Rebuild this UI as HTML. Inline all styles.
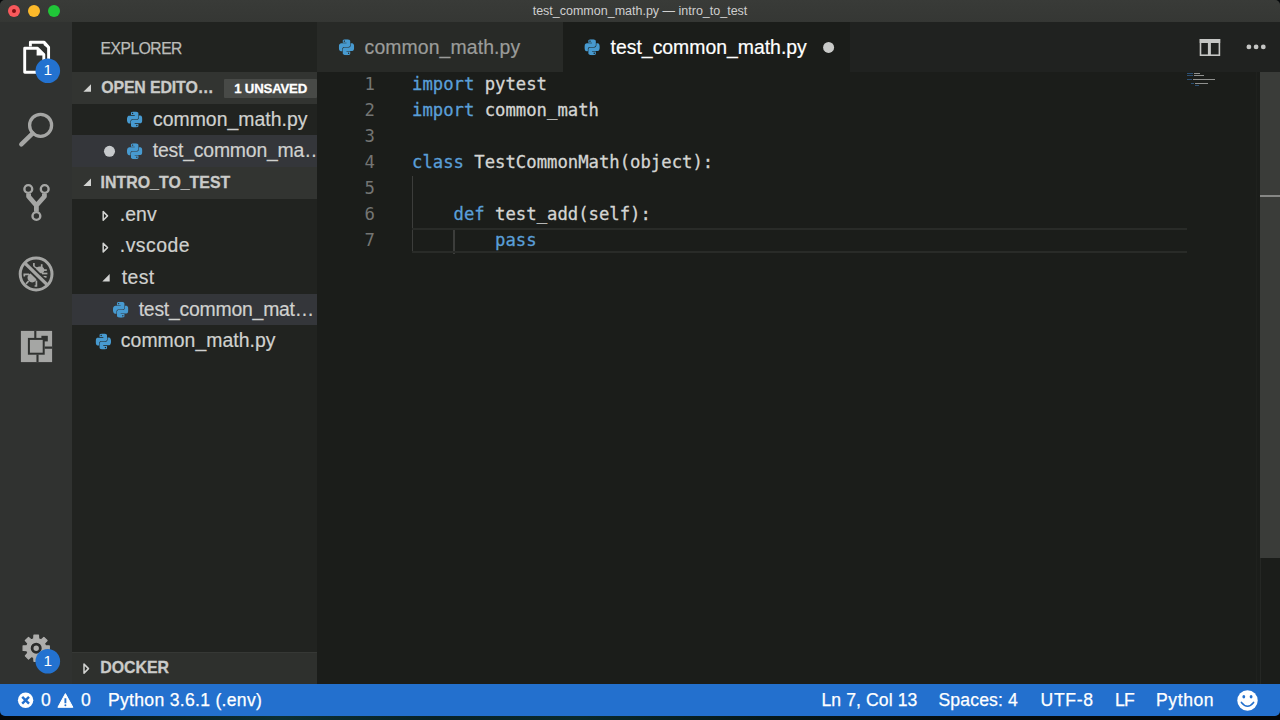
<!DOCTYPE html>
<html><head><meta charset="utf-8"><title>test_common_math.py — intro_to_test</title>
<style>
*{margin:0;padding:0;box-sizing:border-box}
html,body{width:1280px;height:720px;overflow:hidden;background:#06090b;font-family:"Liberation Sans",sans-serif;}
.abs{position:absolute}
#desk{position:absolute;left:0;top:708px;width:1280px;height:12px;background:linear-gradient(90deg,#05080a 0%,#0a2024 12%,#0c3034 22%,#082226 34%,#0a2a2c 45%,#06181a 60%,#050d10 75%,#05080a 100%)}
#win{position:absolute;left:0;top:0;width:1280px;height:715.7px;background:#1b1d1a;overflow:hidden;border-radius:5px}
#title{position:absolute;left:0;top:0;width:1280px;height:22px;background:linear-gradient(#393b38,#353734);color:#cfcfcf;font-size:12.5px;text-align:center;line-height:23px;white-space:nowrap}
.tl{position:absolute;top:4.5px;width:12.6px;height:12.6px;border-radius:50%}
#act{position:absolute;left:0;top:22px;width:72px;height:662px;background:#303230}
#side{position:absolute;left:72px;top:22px;width:245px;height:662px;background:#212320;color:#cccccc;overflow:hidden}
#side .ttl{-webkit-text-stroke:0.25px;position:absolute;left:29.5px;top:0;height:50px;line-height:54.4px;font-size:15.6px;color:#bbbcba;white-space:nowrap}
.hdr{-webkit-text-stroke:0.3px;position:absolute;left:0;width:245px;height:31.7px;background:#323431;font-weight:bold;font-size:15.9px;color:#cacbc9;line-height:32px;white-space:nowrap}
.row{-webkit-text-stroke:0.2px;position:absolute;left:0;width:245px;height:31.7px;font-size:19.4px;line-height:30.4px;color:#d0d1cf;white-space:nowrap;overflow:hidden}
.row.sel{background:#34363a}
.badge{position:absolute;left:152.3px;top:6.6px;width:92.7px;height:18.8px;background:#484a47;color:#ffffff;font-size:13.2px;line-height:19.5px;font-weight:bold;text-align:center;border-radius:1px}
#tabs{position:absolute;left:317px;top:22px;width:963px;height:50px;background:#202220}
.tab{-webkit-text-stroke:0.2px;position:absolute;top:0;height:50px;font-size:19.4px;line-height:51px;white-space:nowrap}
#ed{position:absolute;left:317px;top:72px;width:963px;height:612px;background:#1b1d1a;font-family:"DejaVu Sans Mono","Liberation Mono",monospace;font-size:17.25px}
.ln{position:absolute;left:0;width:58px;text-align:right;color:#747573;height:26px;line-height:26px}
.cl{position:absolute;left:95px;height:26px;line-height:26px;color:#d4d5d3;white-space:pre;-webkit-text-stroke:0.3px}
.k{color:#5a9fd8}
.g{position:absolute;background:#3c3d3b;width:1.4px}
.cur{position:absolute;left:95px;width:775px;height:2.9px;background:#292b28}
#status{-webkit-text-stroke:0.25px;position:absolute;left:0;top:684px;width:1280px;height:32px;background:#2370ce;color:#fff;font-size:17.6px;line-height:32px;white-space:nowrap}
#status span{position:absolute;top:0}
.b1{position:absolute;color:#fff;font-size:15.4px;line-height:16px;width:20px;text-align:center}
#t_expl{letter-spacing:-0.437px;margin-left:-1.00px}
#t_oe{letter-spacing:-0.126px;margin-left:0.00px}
#t_uns{letter-spacing:-0.180px;margin-left:0.00px}
#t_r1{letter-spacing:0.042px;margin-left:0.60px}
#t_itt{letter-spacing:0.015px;margin-left:-0.60px}
#t_env{letter-spacing:0.060px;margin-left:-1.20px}
#t_vsc{letter-spacing:0.480px;margin-left:-1.20px}
#t_test{letter-spacing:0.360px;margin-left:0.80px}
#t_r3{letter-spacing:-0.228px;margin-left:0.40px}
#t_r4{letter-spacing:0.042px;margin-left:-0.20px}
#t_dock{letter-spacing:0.000px;margin-left:-1.00px}
#t_tab1{letter-spacing:0.111px;margin-left:0.40px}
#t_tab2{letter-spacing:0.000px;margin-left:1.00px}
#t_s0{letter-spacing:0.000px;margin-left:0.80px}
#t_s1{letter-spacing:0.000px;margin-left:0.80px}
#t_spy{letter-spacing:0.290px;margin-left:0.00px}
#t_ln{letter-spacing:0.082px;margin-left:0.00px}
#t_sp{letter-spacing:0.135px;margin-left:0.00px}
#t_utf{letter-spacing:0.630px;margin-left:-0.40px}
#t_lf{letter-spacing:-0.700px;margin-left:-0.50px}
#t_lang{letter-spacing:0.576px;margin-left:0.00px}

</style></head><body>
<div id="desk"></div>
<div id="win">
 <div id="title"><span id="t_title">test_common_math.py — intro_to_test</span>
  <div class="tl" style="left:7.6px;background:#f9595c"></div>
  <div class="tl" style="left:27.7px;background:#fcb92a"></div>
  <div class="tl" style="left:47.7px;background:#20c638"></div>
  <div class="abs" style="left:11.8px;top:8.7px;width:4.2px;height:4.2px;border-radius:50%;background:#7d1012"></div>
 </div>
 <div id="act"></div>
 <div id="side">
  <div class="ttl"><span id="t_expl">EXPLORER</span></div>
  <div class="hdr" style="top:50.3px"><span class="abs" id="t_oe" style="left:29.2px">OPEN EDITO…</span><div class="badge"><span id="t_uns">1 UNSAVED</span></div></div>
  <div class="row" style="top:81.7px"><span class="abs" id="t_r1" style="left:80.3px">common_math.py</span></div>
  <div class="row sel" style="top:113.4px"><span class="abs" id="t_r2" style="left:80.7px;letter-spacing:-0.19px">test_common_ma…</span></div>
  <div class="hdr" style="top:145.1px"><span class="abs" id="t_itt" style="left:29.2px">INTRO_TO_TEST</span></div>
  <div class="row" style="top:176.7px"><span class="abs" id="t_env" style="left:49px">.env</span></div>
  <div class="row" style="top:208.4px"><span class="abs" id="t_vsc" style="left:49px">.vscode</span></div>
  <div class="row" style="top:240.1px"><span class="abs" id="t_test" style="left:49px">test</span></div>
  <div class="row sel" style="top:271.8px"><span class="abs" id="t_r3" style="left:66.3px">test_common_mat…</span></div>
  <div class="row" style="top:303.4px"><span class="abs" id="t_r4" style="left:49px">common_math.py</span></div>
  <div class="hdr" style="top:629.6px;height:33px;background:#2e302d;border-top:1.4px solid #363835;line-height:30.6px"><span class="abs" id="t_dock" style="left:29.2px">DOCKER</span></div>
 </div>
 <div id="tabs">
  <div class="tab" style="left:0;width:246px;background:#282a27;color:#9b9c9a"><span class="abs" id="t_tab1" style="left:47.2px">common_math.py</span></div>
  <div class="tab" style="left:246px;width:287px;background:#1b1d1a;color:#ffffff"><span class="abs" id="t_tab2" style="left:46.6px">test_common_math.py</span></div>
 </div>
 <div id="ed">
  <div class="g" style="left:94.8px;top:103.7px;height:77.8px"></div>
  <div class="g" style="left:136.3px;top:155.5px;height:26px"></div>
  <div class="cur" style="top:155.5px"></div><div class="cur" style="top:178.5px"></div>
  <div class="ln" style="top:-1.00px">1</div><div class="cl" style="top:-1.00px"><span class="k">import</span> pytest</div>
  <div class="ln" style="top:24.92px">2</div><div class="cl" style="top:24.92px"><span class="k">import</span> common_math</div>
  <div class="ln" style="top:50.84px">3</div>
  <div class="ln" style="top:76.76px">4</div><div class="cl" style="top:76.76px"><span class="k">class</span> TestCommonMath(object):</div>
  <div class="ln" style="top:102.68px">5</div>
  <div class="ln" style="top:128.60px">6</div><div class="cl" style="top:128.60px">    <span class="k">def</span> test_add(self):</div>
  <div class="ln" style="top:154.52px">7</div><div class="cl" style="top:154.52px">        <span class="k">pass</span></div>
  <!-- minimap -->
  <div class="abs" style="left:870.20px;top:0.55px;width:12.35px;height:1.5px;background:linear-gradient(90deg,#2d5073 0 46.2%,transparent 46.2% 53.8%,#8f908e 53.8%)"></div>
  <div class="abs" style="left:870.20px;top:2.55px;width:17.10px;height:1.5px;background:linear-gradient(90deg,#2d5073 0 33.3%,transparent 33.3% 38.9%,#8f908e 38.9%)"></div>
  <div class="abs" style="left:870.20px;top:6.55px;width:27.55px;height:1.5px;background:linear-gradient(90deg,#2d5073 0 17.2%,transparent 17.2% 20.7%,#8f908e 20.7%)"></div>
  <div class="abs" style="left:874.00px;top:10.55px;width:17.10px;height:1.5px;background:linear-gradient(90deg,#2d5073 0 16.7%,transparent 16.7% 22.2%,#8f908e 22.2%)"></div>
  <div class="abs" style="left:877.80px;top:12.55px;width:3.80px;height:1.5px;background:#2d5073"></div>
  <!-- scrollbar -->
  <div class="abs" style="left:939.4px;top:0;width:1px;height:612px;background:#1f211e"></div><div class="abs" style="left:943.2px;top:0;width:1.3px;height:612px;background:#252724"></div>
  <div class="abs" style="left:943px;top:0;width:20px;height:486px;background:#3a3c39"></div>
  <div class="abs" style="left:943px;top:122.6px;width:20px;height:2.8px;background:#868785"></div>
 </div>
 <div id="status">
  <span id="t_s0" style="left:40.3px">0</span><span id="t_s1" style="left:80.3px">0</span><span id="t_spy" style="left:108px">Python 3.6.1 (.env)</span>
  <span id="t_ln" style="left:821.5px">Ln 7, Col 13</span><span id="t_sp" style="left:938.5px">Spaces: 4</span><span id="t_utf" style="left:1041px">UTF-8</span><span id="t_lf" style="left:1115.5px">LF</span><span id="t_lang" style="left:1156px">Python</span>
 </div>
 
<svg class="abs" style="left:0;top:0" width="1280" height="720" viewBox="0 0 1280 720">
<defs><symbol id="py" viewBox="0 0 24 24" preserveAspectRatio="none"><path fill="#479ad0" d="M14.25.18l.9.2.73.26.59.3.45.32.34.34.25.34.16.33.1.3.04.26.02.2-.01.13V8.5l-.05.63-.13.55-.21.46-.26.38-.3.31-.33.25-.35.19-.35.14-.33.1-.3.07-.26.04-.21.02H8.77l-.69.05-.59.14-.5.22-.41.27-.33.32-.27.35-.2.36-.15.37-.1.35-.07.32-.04.27-.02.21v3.06H3.17l-.21-.03-.28-.07-.32-.12-.35-.18-.36-.26-.36-.36-.35-.46-.32-.59-.28-.73-.21-.88-.14-1.05-.05-1.23.06-1.22.16-1.04.24-.87.32-.71.36-.57.4-.44.42-.33.42-.24.4-.16.36-.1.32-.05.24-.01h.16l.06.01h8.16v-.83H6.18l-.01-2.75-.02-.37.05-.34.11-.31.17-.28.25-.26.31-.23.38-.2.44-.18.51-.15.58-.12.64-.1.71-.06.77-.04.84-.02 1.27.05zm-6.3 1.98l-.23.33-.08.41.08.41.23.34.33.22.41.09.41-.09.33-.22.23-.34.08-.41-.08-.41-.23-.33-.33-.22-.41-.09-.41.09zm13.09 3.95l.28.06.32.12.35.18.36.27.36.35.35.47.32.59.28.73.21.88.14 1.04.05 1.23-.06 1.23-.16 1.04-.24.86-.32.71-.36.57-.4.45-.42.33-.42.24-.4.16-.36.09-.32.05-.24.02-.16-.01h-8.22v.82h5.84l.01 2.76.02.36-.05.34-.11.31-.17.29-.25.25-.31.24-.38.2-.44.17-.51.15-.58.13-.64.09-.71.07-.77.04-.84.01-1.27-.04-1.07-.14-.9-.2-.73-.25-.59-.3-.45-.33-.34-.34-.25-.34-.16-.33-.1-.3-.04-.25-.02-.2.01-.13v-5.34l.05-.64.13-.54.21-.46.26-.38.3-.32.33-.24.35-.2.35-.14.33-.1.3-.06.26-.04.21-.02.13-.01h5.84l.69-.05.59-.14.5-.21.41-.28.33-.32.27-.35.2-.36.15-.36.1-.35.07-.32.04-.28.02-.21V6.07h2.09l.14.01zm-6.47 14.25l-.23.33-.08.41.08.41.23.33.33.23.41.08.41-.08.33-.23.23-.33.08-.41-.08-.41-.23-.33-.33-.23-.41-.08-.41.08z"/></symbol></defs>
<!-- files icon -->
<g fill="none" stroke="#ffffff" stroke-width="2.9" stroke-linejoin="round">
 <path d="M30.4 46.5V42.3H44.2L48.6 47.2V66.5H45.5"/>
 <path d="M24.7 48.2H37.5L43.8 54.6V72.3H24.7Z"/>
</g>
<path d="M36.6 47.4V55.6H44.6L44.6 54Z" fill="#ffffff"/>
<path d="M43.6 42L49.4 47.6L49.4 49.5L43.6 45Z" fill="#ffffff"/>
<circle cx="47.8" cy="70.8" r="12.3" fill="#2372d0"/>
<!-- search -->
<circle cx="40.6" cy="125.3" r="11" fill="none" stroke="#a5a6a4" stroke-width="3.3"/>
<path d="M32.6 133.4L21.3 144.4" stroke="#a5a6a4" stroke-width="4.4" stroke-linecap="round"/>
<!-- git -->
<g fill="none" stroke="#a5a6a4">
 <path d="M28.6 193.5V196.5L36.4 205.5L44.4 196.5V193.5M36.4 204V211.5" stroke-width="4.8" stroke-linejoin="round"/>
 <circle cx="28.3" cy="189" r="3.9" stroke-width="2.4"/>
 <circle cx="44.7" cy="189" r="3.9" stroke-width="2.4"/>
 <circle cx="36.4" cy="216" r="3.9" stroke-width="2.4"/>
</g>
<!-- debug -->
<g>
 <clipPath id="dbgclip"><circle cx="36.1" cy="274" r="14.6"/></clipPath>
 <g fill="#a5a6a4" stroke="none">
  <circle cx="32.2" cy="277.8" r="4.7"/>
  <ellipse cx="40" cy="269.9" rx="4.3" ry="3.5"/>
 </g>
 <g fill="none" stroke="#a5a6a4" stroke-width="1.7">
  <path d="M37.5 268.5L33.9 266.8V262.9"/>
  <path d="M41.7 268.2V264.2"/>
  <path d="M42.6 270.1H46.8"/>
  <path d="M41.9 273.5H47.4"/>
  <path d="M42.5 276.8H46.6"/>
  <path d="M29 274.3H24.3V276.6"/>
  <path d="M36.4 280.5V286H34.6"/>
  <path d="M28.6 281L26 283.8"/>
 </g>
 <path d="M22.6 260.8L49.6 287.2" stroke="#303230" stroke-width="7" clip-path="url(#dbgclip)"/>
 <circle cx="36.1" cy="274" r="15.9" fill="none" stroke="#a5a6a4" stroke-width="3"/>
 <path d="M24.9 263.1L47.3 284.9" stroke="#a5a6a4" stroke-width="3.4"/>
</g>
<!-- extensions -->
<g>
 <rect x="20.9" y="330.9" width="31.2" height="31.2" fill="#a5a6a4"/>
 <rect x="41.4" y="335.8" width="6.4" height="5.6" fill="#303230"/>
 <rect x="28.9" y="338.9" width="14.8" height="14.8" fill="#a5a6a4" stroke="#303230" stroke-width="2"/>
 <path d="M35.3 330.9V338M44.6 347.6H52.1M37.5 354.6V362.1" stroke="#303230" stroke-width="2.1"/>
</g>
<!-- gear -->
<path d="M33.73 638.92 L33.95 635.09 L38.45 635.09 L38.67 638.92 L41.01 639.89 L43.88 637.34 L47.06 640.52 L44.51 643.39 L45.48 645.73 L49.31 645.95 L49.31 650.45 L45.48 650.67 L44.51 653.01 L47.06 655.88 L43.88 659.06 L41.01 656.51 L38.67 657.48 L38.45 661.31 L33.95 661.31 L33.73 657.48 L31.39 656.51 L28.52 659.06 L25.34 655.88 L27.89 653.01 L26.92 650.67 L23.09 650.45 L23.09 645.95 L26.92 645.73 L27.89 643.39 L25.34 640.52 L28.52 637.34 L31.39 639.89Z" fill="#aeaeac" stroke="#aeaeac" stroke-width="1.2" stroke-linejoin="round"/><circle cx="36.2" cy="648.2" r="4.1" fill="none" stroke="#2a2b2a" stroke-width="2.8"/>
<circle cx="47.8" cy="661.2" r="12.3" fill="#2372d0"/>
<!-- sidebar twisties -->
<g fill="#d2d3d1">
 <path d="M91 84.3V91.8H83.4Z"/>
 <path d="M91 178.6V186.1H83.4Z"/>
 <path d="M109.7 274V281.5H102.3Z"/>
</g>
<g fill="none" stroke="#d2d3d1" stroke-width="1.5" stroke-linejoin="round">
 <path d="M103.2 211.6L107.5 215.9L103.2 220.2Z"/>
 <path d="M103.2 243.3L107.5 247.6L103.2 251.9Z"/>
 <path d="M84 664.1L88.5 668.6L84 673.1Z"/>
</g>
<!-- python icons -->
<use href="#py" x="127" y="111.5" width="15.4" height="16.0"/><use href="#py" x="127" y="143.2" width="15.4" height="16.0"/><use href="#py" x="113" y="301.7" width="15.4" height="16.0"/><use href="#py" x="95.6" y="333.5" width="15.4" height="16.0"/>
<use href="#py" x="338.8" y="39.2" width="15.4" height="16.0"/><use href="#py" x="584.4" y="39.2" width="15.4" height="16.0"/>
<!-- dirty dots -->
<circle cx="109.5" cy="151.3" r="5.5" fill="#c6c9cb"/>
<circle cx="828.6" cy="47.4" r="5.5" fill="#c9cac8"/>
<!-- editor actions -->
<g>
 <rect x="1200.5" y="39.8" width="18.9" height="15.4" fill="none" stroke="#c5c6c4" stroke-width="1.6"/>
 <path d="M1199.7 41H1220.2" stroke="#c5c6c4" stroke-width="4"/>
 <path d="M1209.4 39.4V55.5" stroke="#c5c6c4" stroke-width="3"/>
 <circle cx="1248.9" cy="46.9" r="2.4" fill="#c5c6c4"/><circle cx="1256.1" cy="46.9" r="2.4" fill="#c5c6c4"/><circle cx="1263.3" cy="46.9" r="2.4" fill="#c5c6c4"/>
</g>
<!-- status icons -->
<circle cx="25.6" cy="700.2" r="7.7" fill="#ffffff"/>
<path d="M22.2 696.8L29 703.6M29 696.8L22.2 703.6" stroke="#2370ce" stroke-width="2.4"/>
<path d="M65.4 693.6L72.9 707.3H57.9Z" fill="#ffffff" stroke="#ffffff" stroke-width="1" stroke-linejoin="round"/>
<path d="M65.4 698.2V703.2" stroke="#2370ce" stroke-width="1.9"/><circle cx="65.4" cy="705.3" r="1" fill="#2370ce"/>
<circle cx="1247.5" cy="700.5" r="10.2" fill="#ffffff"/>
<ellipse cx="1243.8" cy="696.7" rx="1.4" ry="1.8" fill="#2370ce"/><ellipse cx="1251.1" cy="696.7" rx="1.4" ry="1.8" fill="#2370ce"/>
<path d="M1241.4 702.4Q1247.5 710 1253.6 702.4" fill="none" stroke="#2370ce" stroke-width="1.6" stroke-linecap="round"/>
</svg>

 <div class="b1" style="left:37.8px;top:61.8px"><span id="t_b1">1</span></div>
 <div class="b1" style="left:37.8px;top:653.2px"><span id="t_b2">1</span></div>
</div>
</body></html>
